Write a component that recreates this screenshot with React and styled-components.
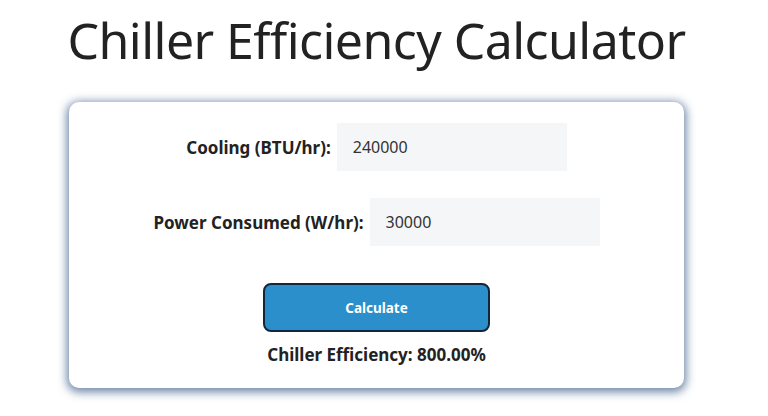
import React, { useState } from 'react';
import styled, { createGlobalStyle } from 'styled-components';

const GlobalStyle = createGlobalStyle`
  html, body {
    margin: 0;
    padding: 0;
    background: #ffffff;
  }

  body {
    font-family: 'Noto Sans', 'Open Sans', Arial, sans-serif;
    color: #222222;
  }
`;

const Page = styled.div`
  width: 753px;
  height: 416px;
  box-sizing: border-box;
  display: flex;
  flex-direction: column;
  align-items: center;
`;

const Title = styled.h1`
  margin: 8px 0 30px 0;
  font-size: 50px;
  font-weight: 400;
  line-height: 64px;
  color: #222222;
  letter-spacing: -0.55px;
`;

const Card = styled.div`
  width: 615px;
  box-sizing: border-box;
  padding: 21px 30px 22px;
  background: #ffffff;
  border-radius: 10px;
  box-shadow: 0 2px 10px 2px rgba(50, 85, 130, 0.72);
  display: flex;
  flex-direction: column;
  align-items: center;
`;

const Row = styled.div`
  display: flex;
  align-items: center;
  justify-content: center;
  gap: 6px;
  margin-bottom: 27px;
`;

const Label = styled.label`
  font-size: 17px;
  font-weight: 700;
  color: #222222;
`;

const Input = styled.input`
  width: 230px;
  height: 48px;
  box-sizing: border-box;
  padding: 0 16px;
  border: none;
  background: #f4f6f8;
  font-family: inherit;
  font-size: 16px;
  color: #333333;
  outline: none;
`;

const Button = styled.button`
  width: 227px;
  height: 49px;
  margin-top: 10px;
  border: 2px solid #14273a;
  border-radius: 8px;
  background: #2a8fcb;
  color: #ffffff;
  font-family: inherit;
  font-size: 13.5px;
  font-weight: 700;
  cursor: pointer;
`;

const Result = styled.div`
  margin-top: 11px;
  font-size: 17px;
  font-weight: 700;
  color: #222222;
`;

export default function App() {
  const [cooling, setCooling] = useState('240000');
  const [power, setPower] = useState('30000');
  const [efficiency, setEfficiency] = useState(800);

  const calculate = () => {
    const c = parseFloat(cooling);
    const p = parseFloat(power);
    if (!isNaN(c) && !isNaN(p) && p !== 0) setEfficiency((c / p) * 100);
  };

  return (
    <>
      <GlobalStyle />
      <Page>
        <Title>Chiller Efficiency Calculator</Title>
        <Card>
          <Row>
            <Label htmlFor="cooling">Cooling (BTU/hr):</Label>
            <Input id="cooling" value={cooling} onChange={(e) => setCooling(e.target.value)} />
          </Row>
          <Row>
            <Label htmlFor="power">Power Consumed (W/hr):</Label>
            <Input id="power" value={power} onChange={(e) => setPower(e.target.value)} />
          </Row>
          <Button onClick={calculate}>Calculate</Button>
          <Result>Chiller Efficiency: {efficiency.toFixed(2)}%</Result>
        </Card>
      </Page>
    </>
  );
}
